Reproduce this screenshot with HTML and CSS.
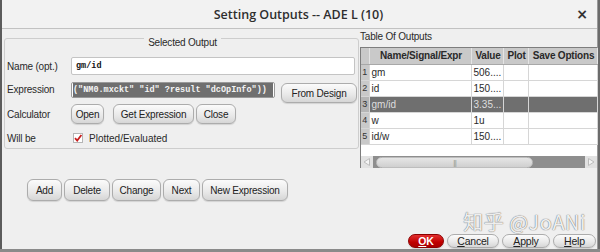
FILE: index.html
```html
<!DOCTYPE html>
<html lang="en">
  <head>
    <meta charset="UTF-8" />
    <meta name="viewport" content="width=device-width, initial-scale=1.0" />
    <title>Setting Outputs -- ADE L (10)</title>
    <link rel="stylesheet" href="styles.css">
  </head>
  <body>
    <div class="window">
      <!-- Title bar -->
      <div class="titlebar">
        <span></span>
        <span class="title">Setting Outputs -- ADE L (10)</span>
        <span class="close-btn">&times;</span>
      </div>

      <div class="content">
        <!-- Left side: selected output form -->
        <div class="left">
          <div class="group">
            <div class="group-title">Selected Output</div>

            <div class="form-row row-name">
              <label>Name (opt.)</label>
              <div class="field name-field">gm/id</div>
            </div>

            <div class="form-row row-expr">
              <label>Expression</label>
              <div class="field expr-field"><span class="selected">("NM0.mxckt" "id" ?result "dcOpInfo"))</span></div>
              <button class="btn btn-design">From Design</button>
            </div>

            <div class="form-row row-calc">
              <label>Calculator</label>
              <button class="btn btn-open">Open</button>
              <button class="btn btn-get">Get Expression</button>
              <button class="btn btn-close">Close</button>
            </div>

            <div class="form-row row-will">
              <label>Will be</label>
              <svg class="check" width="10" height="10" viewBox="0 0 10 10">
                <rect x="0.5" y="0.5" width="9" height="9" fill="#fff" stroke="#b5b5b5" />
                <path d="M2 5.2 L4.2 7.6 L8.4 2" fill="none" stroke="#c81e1e" stroke-width="1.8" />
              </svg>
              <span>Plotted/Evaluated</span>
            </div>
          </div>

          <div class="actions">
            <button class="btn act-add">Add</button>
            <button class="btn act-delete">Delete</button>
            <button class="btn act-change">Change</button>
            <button class="btn act-next">Next</button>
            <button class="btn act-new">New Expression</button>
          </div>
        </div>

        <!-- Right side: table of outputs -->
        <div class="right">
          <div class="table-title">Table Of Outputs</div>
          <div class="table-box">
            <table class="outputs">
              <thead>
                <tr>
                  <th class="num"></th>
                  <th class="c-name">Name/Signal/Expr</th>
                  <th class="c-value">Value</th>
                  <th class="c-plot">Plot</th>
                  <th class="c-save">Save Options</th>
                </tr>
              </thead>
              <tbody>
                <tr><td class="num">1</td><td>gm</td><td>506....</td><td></td><td></td></tr>
                <tr><td class="num">2</td><td>id</td><td>150....</td><td></td><td></td></tr>
                <tr class="sel-row"><td class="num">3</td><td>gm/id</td><td>3.35...</td><td></td><td></td></tr>
                <tr><td class="num">4</td><td>w</td><td>1u</td><td></td><td></td></tr>
                <tr><td class="num">5</td><td>id/w</td><td>150....</td><td></td><td></td></tr>
              </tbody>
            </table>
            <div class="table-empty"></div>
            <div class="scrollbar">
              <span class="arrow">
                <svg width="8" height="8" viewBox="0 0 8 8"><path d="M6.5 0.5 L1 4 L6.5 7.5 Z" fill="#f4f4f4" stroke="#bcbcbc" /></svg>
              </span>
              <span class="thumb"><span class="grip">|||</span></span>
              <span class="track-rest"></span>
              <span class="arrow">
                <svg width="8" height="8" viewBox="0 0 8 8"><path d="M1.5 0.5 L7 4 L1.5 7.5 Z" fill="#f4f4f4" stroke="#bcbcbc" /></svg>
              </span>
            </div>
          </div>
        </div>
      </div>

      <!-- Dialog buttons -->
      <div class="footer">
        <button class="btn btn-ok"><u>O</u>K</button>
        <button class="btn btn-cancel"><u>C</u>ancel</button>
        <button class="btn btn-apply"><u>A</u>pply</button>
        <button class="btn btn-help"><u>H</u>elp</button>
      </div>

      <div class="watermark">知乎 @JoANi</div>
    </div>
    <div class="desktop-strip"></div>
  </body>
</html>
```

FILE: styles.css
```css
/* General Styling */
* {
  margin: 0;
  padding: 0;
  box-sizing: border-box;
}

body {
  background-color: #6b6b6b;
  width: 600px;
  height: 252px;
  overflow: hidden;
  font-family: "Liberation Sans", Arial, sans-serif;
  font-size: 10px;
  color: #2a2a2a;
}

.window {
  position: relative;
  width: 598px;
  height: 249px;
  background-color: #efefef;
  border-left: 2px solid #5c5c5c;
  border-right: 1px solid #9a9a9a;
}

/* Title bar */
.titlebar {
  height: 29px;
  display: grid;
  grid-template-columns: 1fr auto 1fr;
  align-items: center;
  background-color: #f2f2f2;
  border-bottom: 1px solid #c2c2c2;
}

.title {
  font-family: "Open Sans", sans-serif;
  font-size: 12.5px;
  font-weight: 600;
  color: #2e2e2e;
  margin-left: -2px;
}

.close-btn {
  justify-self: end;
  margin-right: 9px;
  font-family: "DejaVu Sans", sans-serif;
  font-size: 14px;
  font-weight: bold;
  color: #333;
}

.content {
  display: flex;
  height: 205px;
}

/* Left column */
.left {
  width: 355px;
  margin-left: 2px;
  margin-right: 1px;
  padding-top: 9px;
}

.group {
  border: 1px solid #cdcdcd;
  border-radius: 3px;
  padding: 0 0 3px 2px;
  height: 111px;
}

.group-title {
  display: table;
  margin: -2px auto 0;
  padding: 0 4px;
  line-height: 12px;
  background-color: #efefef;
  letter-spacing: -0.2px;
}

.form-row {
  display: flex;
  align-items: center;
}

.form-row label {
  width: 64px;
  flex-shrink: 0;
  letter-spacing: -0.2px;
}

.row-name {
  margin-top: 8px;
  height: 18px;
}

.row-expr {
  margin-top: 7px;
  height: 21px;
  align-items: flex-start;
}

.row-expr label {
  line-height: 16px;
}

.row-calc {
  margin-top: 1px;
  height: 20px;
}

.row-will {
  margin-top: 7px;
  height: 14px;
}

.field {
  background-color: #fff;
  border: 1px solid #c4c4c4;
  border-radius: 2px;
  font-family: "Liberation Mono", monospace;
  font-size: 8.5px;
  font-weight: bold;
  white-space: nowrap;
  overflow: hidden;
}

.name-field {
  width: 284px;
  height: 18px;
  line-height: 16px;
  padding-left: 4px;
  color: #111;
}

.expr-field {
  width: 204px;
  height: 16px;
  line-height: 14px;
  padding-left: 1px;
  border-color: #9a9a9a;
}

.selected {
  display: block;
  background-color: #6f6f6f;
  color: #f4f4f4;
  width: 200px;
  overflow: hidden;
}

.check {
  margin-left: 2px;
  margin-right: 6px;
}

/* Buttons */
.btn {
  font-family: "Liberation Sans", Arial, sans-serif;
  font-size: 10px;
  color: #222;
  height: 20px;
  background: linear-gradient(#fbfbfb, #e8e8e8 60%, #d6d6d6);
  border: 1px solid #acacac;
  border-radius: 6px;
  box-shadow: 0 1px 1px rgba(0, 0, 0, 0.12);
  letter-spacing: -0.2px;
}

.btn-design {
  width: 76px;
  margin-left: 6px;
  margin-top: 1px;
}

.btn-open {
  width: 33px;
}

.btn-get {
  width: 81px;
  margin-left: 9px;
}

.btn-close {
  width: 40px;
  margin-left: 2px;
}

.actions {
  display: flex;
  gap: 2px;
  margin-top: 30px;
  margin-left: 23px;
}

.actions .btn {
  height: 22px;
}

.act-add { width: 35px; }
.act-delete { width: 46px; }
.act-change { width: 49px; }
.act-next { width: 37px; }
.act-new { width: 86px; }

/* Right column */
.right {
  width: 237px;
}

.table-title {
  height: 18px;
  line-height: 14px;
  padding-top: 1px;
  letter-spacing: -0.2px;
}

.table-box {
  background-color: #fff;
  border-top: 1px solid #7d7d7d;
  border-left: 1px solid #7d7d7d;
  height: 121px;
  display: flex;
  flex-direction: column;
}

.outputs {
  border-collapse: collapse;
  table-layout: fixed;
  width: 236px;
}

.outputs th,
.outputs td {
  height: 16px;
  padding: 0 0 0 2px;
  border-right: 1px solid #d6d6d6;
  border-bottom: 1px solid #d6d6d6;
  text-align: left;
  white-space: nowrap;
  overflow: hidden;
  font-weight: normal;
}

.outputs th {
  background-color: #c9c9c9;
  font-weight: bold;
  text-align: center;
  border-right-color: #e4e4e4;
  border-bottom-color: #a8a8a8;
  letter-spacing: -0.2px;
}

.outputs .num {
  width: 8px;
  padding: 0;
  text-align: center;
  background-color: #c9c9c9;
  font-size: 9px;
  color: #333;
}

.c-name { width: 102px; }
.c-value { width: 32px; }
.c-plot { width: 25px; }
.c-save { width: 69px; }

.sel-row td {
  background-color: #6f6f6f;
  color: #dedede;
}

.sel-row .num {
  background-color: #b5b5b5;
}

.table-empty {
  flex: 1;
}

.scrollbar {
  height: 12px;
  display: flex;
  align-items: center;
  background-color: #8e8e8e;
}

.arrow {
  width: 12px;
  height: 12px;
  background-color: #e2e2e2;
  display: flex;
  align-items: center;
  justify-content: center;
}

.thumb {
  width: 157px;
  height: 11px;
  margin-left: 3px;
  border-radius: 6px;
  background: linear-gradient(#e6e6e6, #cfcfcf);
  border: 1px solid #bdbdbd;
  display: flex;
  align-items: center;
  justify-content: center;
}

.grip {
  font-size: 7px;
  color: #999;
  letter-spacing: -1px;
}

.track-rest {
  flex: 1;
}

/* Footer buttons */
.footer {
  display: flex;
  justify-content: flex-end;
  gap: 3px;
  padding-right: 1px;
  height: 15px;
}

.footer .btn {
  height: 14px;
  line-height: 12px;
  border-radius: 7px;
  font-size: 10.5px;
}

.btn-ok {
  width: 36px;
  background: linear-gradient(#e23030, #c00000 60%, #a80000);
  border-color: #8c0000;
  color: #fff;
  font-weight: bold;
}

.btn-cancel { width: 52px; }
.btn-apply { width: 48px; }
.btn-help { width: 43px; }

.watermark {
  position: absolute;
  right: 11px;
  top: 207px;
  font-family: "Noto Sans CJK SC", "Liberation Sans", sans-serif;
  font-size: 20px;
  color: rgba(255, 255, 255, 0.9);
  text-shadow: 0 0 1px #777, 0 0 1px #777;
  letter-spacing: 0.5px;
}

.desktop-strip {
  height: 3px;
  background-color: #8a8a8a;
}
```
